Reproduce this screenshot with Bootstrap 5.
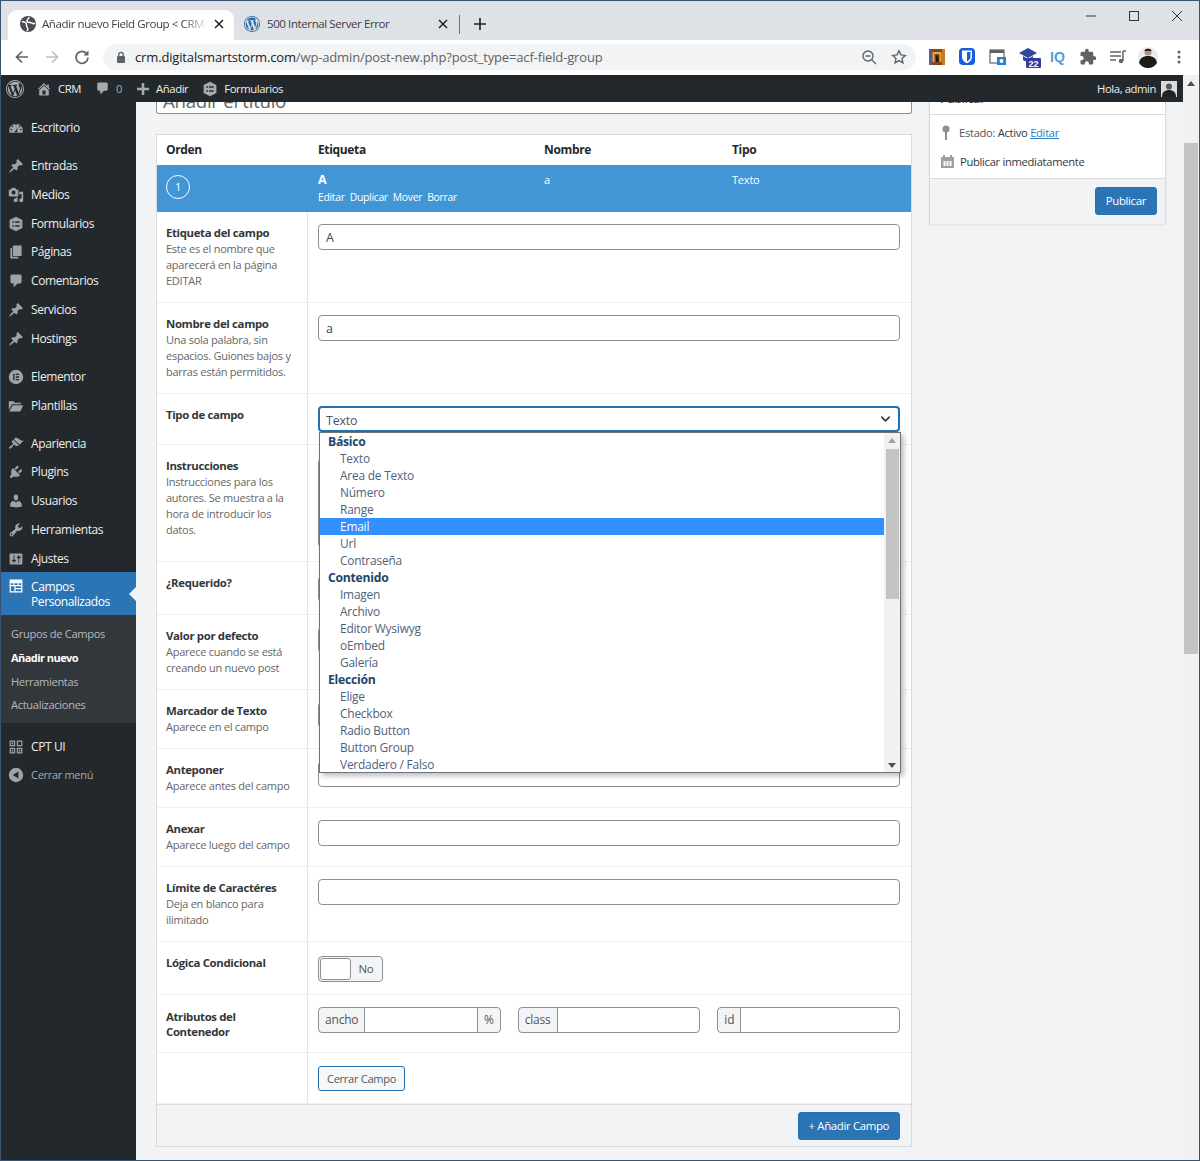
<!DOCTYPE html>
<html lang="es"><head><meta charset="utf-8"><title>Añadir nuevo Field Group</title>
<link href="https://cdn.jsdelivr.net/npm/bootstrap@5.3.0/dist/css/bootstrap.min.css" rel="stylesheet">
<style>
html,body{margin:0;height:1161px;overflow:hidden;background:#f2f3f5}
body{font-family:"Open Sans","Noto Sans",sans-serif;font-size:12px;letter-spacing:-.3px;color:#3c434a;line-height:16px}
.win{width:1200px;height:1161px;border:1px solid #3a5370;overflow:hidden;display:flex;flex-direction:column}
/* browser chrome */
.tabstrip{height:39px;flex:none;background:#dee1e6;position:relative;display:flex;align-items:flex-end;padding-left:7px}
.tabx{height:30px;display:flex;align-items:center;font-size:11.5px;letter-spacing:-.4px;color:#3c4043;white-space:nowrap;flex:none;padding-bottom:2px}
.tab-on{width:226px;background:#fff;border-radius:9px 9px 0 0;padding:0 10px 2px 12px;gap:6px}
.tab-off{width:225px;padding:0 11px 2px 10px;gap:7px}
.tab-title{flex:1;overflow:hidden}
.tab-on .tab-title{-webkit-mask-image:linear-gradient(90deg,#000 85%,transparent);mask-image:linear-gradient(90deg,#000 85%,transparent)}
.tabsep{width:1px;height:19px;background:#70757a;margin:0 0 6px 0;flex:none;align-self:flex-end}
.newtab{width:40px;text-align:center;flex:none}
.winbtns{margin-left:auto;display:flex;align-self:flex-start;padding-top:8px;gap:29px;padding-right:15px}
.toolbar{height:35px;flex:none;background:#fff;display:flex;align-items:center;padding-left:13px;border-bottom:1px solid #fff}
.navic{width:30px;flex:none;display:flex}
.omni{flex:none;width:813px;height:26px;background:#f1f3f4;border-radius:13px;margin-left:-1px;display:flex;align-items:center;padding:0 9px 0 12px;font-size:13px;letter-spacing:-.15px;color:#5f6368}
.omni b{font-weight:400;color:#202124}
.omni-end{margin-left:auto;display:flex;gap:14px;align-items:center}
.exts{display:flex;align-items:center;padding-left:13px;gap:14px}
.e-hat{margin-left:-3px}
.e-iq{margin-left:-6px;color:#4a9fe0;font-family:"Liberation Sans",sans-serif;font-size:14px;letter-spacing:0;font-weight:700}
.e-lst{margin-left:-2px}
.e-av{margin-left:-3px}
.e-dots{margin-left:5px}
.pageframe{flex:1;display:flex;min-height:0}
.pagecol{flex:1;min-width:0;display:flex;flex-direction:column}
.vscroll{width:16px;flex:none;background:#f1f1f1;display:flex;flex-direction:column;align-items:center}
.vscroll-thumb{width:14px;height:511px;background:#c4c4c4;margin-top:57px}
.vscroll-up{margin-top:6px;flex:none}
/* admin bar */
.abar{height:27px;flex:none;background:#23282d;color:#eee;display:flex;align-items:center;font-size:11.3px;letter-spacing:-.42px;padding-left:5px}
.abar svg{flex:none}
.abar .gy{color:#a7aaad}
.abar .me{margin-left:auto;display:flex;align-items:center;gap:5px;padding-right:6px}
.a-i{display:flex;align-items:center;gap:6px}
.a-g{margin-left:14px}
.adm{flex:1;display:flex;min-height:0}
/* sidebar */
.side{width:135px;flex:none;background:#23282d;color:#eef0f1;padding-top:11.6px}
.mi{height:28.8px;display:flex;align-items:center;gap:7px;padding-left:7px;font-size:12px;letter-spacing:-.4px;color:#eee}
.mi svg{fill:#9ea3a8;flex:none;width:16px;height:16px}
.msep{margin-top:9.2px}
.mi-on{height:43px;background:#2c75b5;color:#fff;position:relative;line-height:15px;margin-top:-.8px}
.mi-on svg{fill:#fff;align-self:flex-start;margin-top:6px}
.mi-on::after{content:"";position:absolute;right:0;top:15px;border:7px solid transparent;border-right-color:#f2f3f5;border-left-width:0}
.subm{background:#32373c;padding:7px 0 6px}
.si{height:23.7px;display:flex;align-items:center;padding-left:10px;color:#b4b9be;font-size:11.1px;letter-spacing:-.32px}
.si-on{color:#fff;font-weight:700;font-size:11px;letter-spacing:-.55px}
.mi-mute{color:#a7aaad;font-size:11px;letter-spacing:-.3px}
/* content */
.mainarea{flex:1;min-width:0;padding-left:20px;display:flex;gap:17px}
.col-fields{width:756px;flex:none}
.col-pub{width:237px;flex:none}
.title-cut{height:12px;background:#fff;border:1px solid #8c8f94;border-top:0;border-radius:0 0 3px 3px;overflow:hidden;font-size:18.7px;line-height:20px;color:#666;padding-left:6px;display:flex;align-items:flex-end}
.title-cut span{display:block;margin-bottom:2px}
.fbox{margin-top:20px;border:1px solid #d8dadd;background:#fff;height:1013px;position:relative}
.fhead{height:30px;display:flex;align-items:center;font-weight:700;font-size:12px;letter-spacing:-.35px;color:#23282d}
.c1{width:150px;padding-left:9px;flex:none}.c2{width:226px;padding-left:11px;flex:none}.c3{width:199px;padding-left:11px;flex:none}
.fblue{height:47px;background:#4396d6;color:#fff;display:flex;font-size:11px;letter-spacing:-.2px}
.fblue .c1{display:flex;align-items:center;padding-bottom:3px}
.numc{width:24px;height:24px;border:1px solid #fff;border-radius:50%;display:flex;align-items:center;justify-content:center;font-size:11px}
.fblue .c2,.fblue .c3,.fblue .c4{padding-top:7px}
.fblue strong{display:block;font-size:12.5px;line-height:16px}
.acts{display:flex;gap:5px;font-size:10.4px;letter-spacing:-.3px;line-height:16px;margin-top:1px}
.frow{display:flex;border-bottom:1px solid #f0f0f0}
.flab{width:151px;flex:none;padding:12px 11px 13px 9px;border-right:1px solid #e4e5e7}
.flab h6{margin:0;font-size:11.4px;line-height:17px;font-weight:700;color:#32373c;letter-spacing:-.35px}
.flab p{margin:0;font-size:11px;line-height:16px;color:#666;letter-spacing:-.25px}
.flab-two{padding-top:14px}
.flab-two h6{line-height:15px}
.fval{flex:1;min-width:0;padding:12px 11px 12px 10px}
.form-control.finp,.form-select.finp{height:26px;min-height:0;padding:1px 7px 0;font-size:12.5px;letter-spacing:-.2px;border:1px solid #8c8f94;border-radius:4px;color:#3c434a;box-shadow:none;line-height:24px}
.form-select.finp{border:2px solid #2271b1;padding-left:6px;background-position:right 6px center;background-size:13px 10px;color:#4b5563;background-image:url("data:image/svg+xml,%3csvg xmlns='http://www.w3.org/2000/svg' viewBox='0 0 16 16'%3e%3cpath fill='none' stroke='%23333' stroke-linecap='round' stroke-linejoin='round' stroke-width='2.4' d='m2 5 6 6 6-6'/%3e%3c/svg%3e")}
.form-control.tarea{height:92px;background:#fff;border-color:#8c8f94;display:block}
.tog{display:inline-flex;height:26px;margin-top:2px;width:65px;border:1px solid #8c8f94;border-radius:4px;background:#f3f4f6;align-items:center;padding:1px;font-size:11.5px;color:#555;vertical-align:top}
.tog i{display:block;width:31px;height:22px;background:#fff;border:1px solid #8c8f94;border-radius:3px;flex:none}
.tog span{flex:1;text-align:center}
.igroups{display:flex;gap:17px}
.igroups .input-group{flex:1;min-width:0;flex-wrap:nowrap}
.input-group-text.itxt{height:26px;padding:0 6px;background:#f3f4f6;border-color:#8c8f94;font-size:12px;color:#555;border-radius:4px;letter-spacing:-.2px}
.igroups .form-control{height:26px;border-color:#8c8f94;border-radius:4px;min-height:0;padding:0 6px;min-width:0}
.btn.bclose{height:25px;margin-top:1px;display:block;padding:0 8px;font-size:11px;letter-spacing:-.25px;color:#50575e;border:1px solid #2271b1;border-radius:3px;background:#f6f7f7;line-height:23px}
.ffoot{height:42px;background:#f2f3f5;display:flex;justify-content:flex-end;align-items:flex-start;padding:7px 11px 0 0;border-top:1px solid #dcdcde}
.btn.bwp{background:#2c75b5;border:1px solid #2271b1;color:#fff;font-size:11.4px;letter-spacing:-.35px;border-radius:3px;padding:0 10px;height:28px;line-height:26px}
/* select popup */
.sel-pop{position:absolute;left:162px;top:297px;width:582px;height:341px;background:#fff;border:1px solid #6f7378;box-shadow:3px 3px 5px rgba(0,0,0,.25);display:flex;font-size:11.9px;letter-spacing:-.2px;color:#50627a;overflow:hidden;z-index:5}
.sel-list{flex:1;min-width:0}
.ol,.og{height:17px;line-height:17px;white-space:nowrap}
.og{font-weight:700;color:#23456b;padding-left:8px;font-size:12.2px;letter-spacing:-.25px}
.ol{padding-left:20px}
.ol-on{background:#3390ff;color:#fff}
.sel-sb{width:16px;flex:none;background:#f1f1f1;display:flex;flex-direction:column;align-items:center}
.sel-thumb{width:13px;height:150px;background:#c4c4c4;margin-top:6px}
.sel-a{margin-top:5px;flex:none}
.sel-d{margin-top:auto;margin-bottom:4px;flex:none}
/* publish */
.pub{border:1px solid #d8dadd;border-top:0;height:122px;background:#fff;box-shadow:0 1px 2px rgba(0,0,0,.08)}
.pub-top{height:13px;border-bottom:1px solid #dcdcde;overflow:hidden;font-size:12px;line-height:16px;padding-left:10px;color:#444}
.pub-top span{display:block;margin-top:-11px;font-weight:600}
.pub-bd{height:63px;padding:3px 0 0 10px;background:#fff}
.pub-l{height:29px;display:flex;align-items:center;gap:5px;font-size:11.2px;color:#50575e;letter-spacing:-.3px}
.pub-l a{color:#2a7bc0}
.pub-l b{font-weight:400;color:#32373c}
.pub-ft{height:46px;border-top:1px solid #dcdcde;background:#f2f3f5;display:flex;justify-content:flex-end;padding:8px 8px 0 0}
</style></head><body>
<svg width="0" height="0" class="d-none position-absolute">
<symbol id="wp" viewBox="0 0 20 20"><path d="M20 10c0-5.52-4.48-10-10-10S0 4.48 0 10s4.48 10 10 10 10-4.48 10-10zM10 1.01c4.96 0 8.99 4.03 8.99 8.99s-4.03 8.99-8.99 8.99S1.01 14.96 1.01 10 5.04 1.01 10 1.01zM8.01 14.82L4.96 6.61c.49-.03 1.05-.08 1.05-.08.43-.05.38-1.01-.06-.99 0 0-1.29.1-2.13.1-.15 0-.33 0-.52-.01 1.44-2.17 3.9-3.6 6.7-3.6 2.09 0 3.99.79 5.41 2.09-.6-.08-1.45.35-1.45 1.42 0 .66.38 1.22.79 1.88.31.54.5 1.22.5 2.21 0 1.34-1.27 4.48-1.27 4.48l-2.71-7.5c.48-.03.75-.16.75-.16.43-.05.38-1.1-.05-1.08 0 0-1.3.11-2.14.11-.78 0-2.11-.11-2.11-.11-.43-.02-.48 1.06-.05 1.08l.84.08 1.12 3.04zm6.02 2.15L16.64 10s.67-1.69.39-3.81c.63 1.14.94 2.42.94 3.81 0 2.96-1.56 5.58-3.94 6.97zM2.68 6.77L6.5 17.25c-2.67-1.3-4.47-4.03-4.47-7.25 0-1.18.2-2.26.65-3.23zm7.45 4.53l2.29 6.25c-.75.27-1.57.42-2.42.42-.72 0-1.41-.11-2.06-.3z"/></symbol>
<symbol id="pin" viewBox="0 0 20 20"><path d="M10.44 3.02l1.82-1.82 6.36 6.35-1.83 1.82c-1.05-.68-2.48-.57-3.41.36l-.75.75c-.92.93-1.04 2.35-.35 3.41l-1.83 1.82-2.41-2.41-2.8 2.79c-.42.42-3.38 2.71-3.8 2.29s1.86-3.39 2.28-3.81l2.79-2.79L4.1 9.36l1.83-1.82c1.05.69 2.48.57 3.4-.36l.75-.75c.93-.92 1.05-2.35.36-3.41z"/></symbol>
<symbol id="comm" viewBox="0 0 20 20"><path d="M5 2h10c1.1 0 2 .9 2 2v7c0 1.1-.9 2-2 2h-3l-5 5v-5H5c-1.1 0-2-.9-2-2V4c0-1.1.9-2 2-2z"/></symbol>
<symbol id="forms" viewBox="0 0 20 20"><path fill-rule="evenodd" d="M10 .8 18 5v10l-8 4.2L2 15V5zM5.5 6.6v1.9h1.9V6.6zm3.4 0v1.9h5.6V6.6zm-3.4 4.9v1.9h1.9v-1.9zm3.4 0v1.9h5.6v-1.9z"/></symbol>
</svg>
<div class="win">
 <div class="tabstrip">
  <div class="tabx tab-on"><svg width="16" height="16" viewBox="0 0 16 16"><circle cx="8" cy="8" r="8" fill="#4a4d51"/><path d="M2 6c2-1 3 0 4 1s0 3 1 4 1 3 0 4M9 1c0 2-2 2-2 4s4 1 5 2 2 1 3 0" fill="none" stroke="#fff" stroke-width="1.5"/></svg><span class="tab-title">Añadir nuevo Field Group &lt; CRM — WordPress</span><svg width="10" height="10" viewBox="0 0 10 10"><path d="M1 1l8 8M9 1l-8 8" stroke="#202124" stroke-width="1.5"/></svg></div>
  <div class="tabx tab-off"><svg width="16" height="16" fill="#2e6ea6"><use href="#wp"/></svg><span class="tab-title">500 Internal Server Error</span><svg width="10" height="10" viewBox="0 0 10 10"><path d="M1 1l8 8M9 1l-8 8" stroke="#202124" stroke-width="1.5"/></svg></div>
  <div class="tabsep"></div>
  <div class="newtab tabx justify-content-center"><svg width="12" height="12" viewBox="0 0 12 12"><path d="M6 0v12M0 6h12" stroke="#202124" stroke-width="1.6"/></svg></div>
  <div class="winbtns">
   <svg width="14" height="14" viewBox="0 0 14 14"><path d="M2 7h10" stroke="#333" stroke-width="1"/></svg>
   <svg width="14" height="14" viewBox="0 0 14 14"><rect x="2.5" y="2.5" width="9" height="9" fill="none" stroke="#333"/></svg>
   <svg width="14" height="14" viewBox="0 0 14 14"><path d="M2 2l10 10M12 2 2 12" stroke="#333"/></svg>
  </div>
 </div>
 <div class="toolbar">
  <div class="navic"><svg width="16" height="16" viewBox="0 0 16 16"><path d="M14 8H2.5M8 2.5 2.5 8 8 13.5" fill="none" stroke="#5f6368" stroke-width="1.7"/></svg></div>
  <div class="navic"><svg width="16" height="16" viewBox="0 0 16 16"><path d="M2 8h11.5M8 2.5 13.5 8 8 13.5" fill="none" stroke="#bdc1c6" stroke-width="1.7"/></svg></div>
  <div class="navic"><svg width="16" height="16" viewBox="0 0 16 16"><path d="M13 5a6 6 0 1 0 1 3.5" fill="none" stroke="#5f6368" stroke-width="1.7"/><path d="M14.5 1.5v5h-5z" fill="#5f6368"/></svg></div>
  <div class="omni"><svg class="me-2" width="12" height="12" viewBox="0 0 12 12"><rect x="2" y="5" width="8" height="7" rx="1" fill="#5f6368"/><path d="M3.8 5V3.500a2.200 2.200 0 0 1 4.400 0V5" fill="none" stroke="#5f6368" stroke-width="1.300"/></svg><span><b>crm.digitalsmartstorm.com</b>/wp-admin/post-new.php?post_type=acf-field-group</span>
   <div class="omni-end">
    <svg width="16" height="16" viewBox="0 0 16 16"><circle cx="7" cy="7" r="5" fill="none" stroke="#5f6368" stroke-width="1.400"/><path d="M4.500 7h5M10.500 10.500 15 15" stroke="#5f6368" stroke-width="1.400"/></svg>
    <svg width="16" height="16" viewBox="0 0 16 16"><path d="M8 1.800l1.900 4.100 4.400.5-3.300 3 .9 4.400L8 11.600l-3.900 2.200.9-4.400-3.300-3 4.400-.5z" fill="none" stroke="#5f6368" stroke-width="1.400"/></svg>
   </div></div>
  <div class="exts">
   <svg width="16" height="16" viewBox="0 0 16 16"><rect width="16" height="16" rx="2" fill="#7b4a2a"/><rect x="0" width="3" height="16" fill="#4a5fa8"/><rect x="13" width="3" height="16" fill="#c97a24"/><path d="M4.500 13V4h7v9" fill="none" stroke="#f0a52a" stroke-width="2"/><path d="M7 13V6.500h2.500V13" fill="#1c1c1c"/></svg>
   <svg width="16" height="18" viewBox="0 0 16 18"><rect width="16" height="17" rx="4" fill="#175ddc"/><path d="M3 2.500h10v6.500c0 3-2.200 5-5 6.300C5.200 14 3 12 3 9z" fill="#fff"/><path d="M8 4h3.500v5c0 2-1.500 3.400-3.500 4.400z" fill="#175ddc"/></svg>
   <svg width="18" height="18" viewBox="0 0 18 18"><rect x="1" y="2" width="14" height="13" fill="#fff" stroke="#5f6368" stroke-width="1.200"/><rect x="1" y="2" width="14" height="3" fill="#5f6368"/><rect x="8" y="9" width="9" height="8" fill="#2a7fd0"/><circle cx="12.500" cy="13" r="2" fill="#fff"/></svg>
   <svg class="e-hat" width="24" height="24" viewBox="0 0 24 24"><path d="M1 8l9-5 9 5-9 5z" fill="#2b4a9b"/><path d="M5 11v4c2 2 8 2 10 0v-4l-5 3z" fill="#2b4a9b"/><rect x="8" y="13" width="15" height="10" rx="1" fill="#3a3a9a"/><text x="15.500" y="21.500" font-size="9" font-weight="700" text-anchor="middle" fill="#fff" font-family="Liberation Sans" letter-spacing="0">22</text></svg>
   <span class="e-iq">IQ</span>
   <svg width="18" height="18" viewBox="0 0 24 24" fill="#5f6368"><path d="M20.500 11H19V7c0-1.100-.9-2-2-2h-4V3.500a2.500 2.500 0 0 0-5 0V5H4c-1.100 0-2 .9-2 2v3.800h1.500c1.500 0 2.700 1.200 2.700 2.700S5 16.200 3.500 16.200H2V20c0 1.100.9 2 2 2h3.800v-1.500c0-1.500 1.200-2.700 2.700-2.700s2.700 1.200 2.700 2.700V22H17c1.100 0 2-.9 2-2v-4h1.500a2.500 2.500 0 0 0 0-5z"/></svg>
   <svg class="e-lst" width="18" height="16" viewBox="0 0 18 16"><path d="M1 3h11M1 7h11M1 11h6" stroke="#5f6368" stroke-width="1.500"/><path d="M14 2v10" stroke="#5f6368" stroke-width="1.500"/><circle cx="12" cy="12" r="2.200" fill="#5f6368"/><path d="M14 2h3" stroke="#5f6368" stroke-width="1.500"/></svg>
   <svg class="e-av" width="20" height="22" viewBox="0 0 20 22"><circle cx="10" cy="11" r="10" fill="#e8eaed"/><path d="M1 17c1-5 4-7 9-7s8 2 9 7c-2 3-5 5-9 5s-7-2-9-5z" fill="#1a1a1a"/><circle cx="10" cy="6" r="3.500" fill="#b8927a"/><path d="M6.500 5c0-3 7-3 7 0z" fill="#222"/></svg>
   <svg class="e-dots" width="4" height="14" viewBox="0 0 4 14"><circle cx="2" cy="2" r="1.500" fill="#5f6368"/><circle cx="2" cy="7" r="1.500" fill="#5f6368"/><circle cx="2" cy="12" r="1.500" fill="#5f6368"/></svg>
  </div>
 </div>
 <div class="pageframe">
  <div class="pagecol">
   <div class="abar">
    <svg width="18" height="18" fill="#a7aaad" class="me-2"><use href="#wp"/></svg>
    <div class="a-i ms-1"><svg width="16" height="16" viewBox="0 0 20 20" fill="#a7aaad"><path d="M16 8.500l1.530 1.530-1.060 1.060L10 4.620l-6.470 6.470-1.060-1.060L10 2.500l4 4v-2h2v4zm-6-2.460l6 5.990V18H4v-5.970zM12 17v-5H8v5h4z"/></svg><span>CRM</span></div>
    <div class="a-i a-g gy"><svg width="15" height="15" fill="#a7aaad"><use href="#comm"/></svg><span>0</span></div>
    <div class="a-i a-g"><svg width="14" height="14" viewBox="0 0 14 14"><path d="M7 1v12M1 7h12" stroke="#a7aaad" stroke-width="2.600"/></svg><span>Añadir</span></div>
    <div class="a-i a-g"><svg width="16" height="16" fill="#a7aaad"><use href="#forms"/></svg><span>Formularios</span></div>
    <div class="me"><span>Hola, admin</span><svg width="16" height="16" viewBox="0 0 16 16"><rect width="16" height="16" fill="#d9dbdd"/><path d="M1 16c0-5 3-7 7-7s7 2 7 7z" fill="#222"/><circle cx="8" cy="5.500" r="3" fill="#555"/></svg></div>
   </div>
   <div class="adm">
    <nav class="side">
     <div class="mi"><svg viewBox="0 0 20 20"><path fill-rule="evenodd" d="M2 16a8.500 8.500 0 1 1 16 0zM10 6.500a1 1 0 1 0 0-2 1 1 0 0 0 0 2zM5.500 9a1 1 0 1 0 0-2 1 1 0 0 0 0 2zm9 0a1 1 0 1 0 0-2 1 1 0 0 0 0 2zM4 13a1 1 0 1 0 0-2 1 1 0 0 0 0 2zm12 0a1 1 0 1 0 0-2 1 1 0 0 0 0 2zM8.500 14.500a1.600 1.600 0 0 0 3 0l.5-6-2 4.600a1.700 1.700 0 0 0-1.500 1.400z"/></svg><span>Escritorio</span></div>
     <div class="mi msep"><svg><use href="#pin"/></svg><span>Entradas</span></div>
     <div class="mi"><svg viewBox="0 0 20 20"><path d="M13 11V4c0-.55-.45-1-1-1h-1.670L9 1H5L3.670 3H2c-.55 0-1 .45-1 1v7c0 .55.45 1 1 1h10c.55 0 1-.45 1-1zM7 4.500c1.380 0 2.500 1.120 2.500 2.500S8.380 9.500 7 9.500 4.500 8.380 4.500 7 5.620 4.500 7 4.500zM14 6h5v10.500c0 1.380-1.120 2.500-2.500 2.500S14 17.880 14 16.500s1.120-2.500 2.500-2.500c.17 0 .34.02.5.05V9h-3V6zm-4 8.050V13h2v3.500c0 1.380-1.120 2.500-2.500 2.500S7 17.880 7 16.500 8.120 14 9.500 14c.17 0 .34.02.5.05z"/></svg><span>Medios</span></div>
     <div class="mi"><svg><use href="#forms"/></svg><span>Formularios</span></div>
     <div class="mi"><svg viewBox="0 0 20 20"><path d="M6 15V2h11v13H6zm-1 1h8v2H3V5h2v11z"/></svg><span>Páginas</span></div>
     <div class="mi"><svg><use href="#comm"/></svg><span>Comentarios</span></div>
     <div class="mi"><svg><use href="#pin"/></svg><span>Servicios</span></div>
     <div class="mi"><svg><use href="#pin"/></svg><span>Hostings</span></div>
     <div class="mi msep"><svg viewBox="0 0 20 20"><path fill-rule="evenodd" d="M10 1a9 9 0 1 1 0 18 9 9 0 0 1 0-18zM6.500 6v8h1.700V6zm3.300 0v1.600h4V6zm0 3.200v1.600h4V9.200zm0 3.200V14h4v-1.600z"/></svg><span>Elementor</span></div>
     <div class="mi"><svg viewBox="0 0 20 20"><path d="M1 4h6l1.500 2H16v1.800H5L1 15zM5.800 9H19l-3.500 8H1.500z"/></svg><span>Plantillas</span></div>
     <div class="mi msep"><svg viewBox="0 0 20 20"><path d="M14.480 11.060L7.410 3.990l1.500-1.500c.5-.56 2.300-.47 3.510.32 1.210.8 1.430 1.280 2.910 2.100 1.180.64 2.450 1.260 4.450.85zm-.71.710L6.700 4.700 4.930 6.470c-.39.39-.39 1.020 0 1.410l1.060 1.060c.39.39.39 1.030 0 1.420-.6.6-1.430 1.110-2.210 1.690-.35.26-.7.530-1.010.84C1.430 13.710.96 15.120 1.500 15.660c.54.54 1.950.07 3.180-1.150.31-.31.580-.66.840-1.010.58-.78 1.090-1.610 1.690-2.210.39-.39 1.020-.39 1.410 0l1.060 1.060c.39.39 1.020.39 1.410 0z"/></svg><span>Apariencia</span></div>
     <div class="mi"><svg viewBox="0 0 20 20"><path d="M13.110 4.360L9.870 7.600 8 5.730l3.240-3.240c.35-.34 1.050-.2 1.560.32.52.51.66 1.210.31 1.550zm-8 1.770l.91-1.120 9.010 9.010-1.190.84c-.71.71-2.630 1.160-3.820 1.160H6.140L4.900 17.260c-.59.59-1.540.59-2.120 0-.59-.58-.59-1.530 0-2.120l1.240-1.240v-3.880c0-1.130.4-3.190 1.090-3.890zm7.260 3.970l3.240-3.240c.34-.35 1.040-.21 1.550.31.52.51.66 1.210.31 1.550l-3.240 3.250z"/></svg><span>Plugins</span></div>
     <div class="mi"><svg viewBox="0 0 20 20"><path d="M10 9.250c-2.270 0-2.730-3.440-2.730-3.440C7 4.020 7.820 2 9.970 2c2.160 0 2.980 2.020 2.710 3.810 0 0-.41 3.440-2.680 3.440zm0 2.570L12.720 10c2.390 0 4.520 2.330 4.520 4.530v2.490s-3.650 1.130-7.240 1.130c-3.650 0-7.240-1.130-7.240-1.130v-2.490c0-2.250 1.940-4.480 4.470-4.480z"/></svg><span>Usuarios</span></div>
     <div class="mi"><svg viewBox="0 0 20 20"><path d="M16.680 9.770c-1.340 1.340-3.300 1.670-4.950.99l-5.410 6.520c-.99.99-2.590.99-3.580 0s-.99-2.59 0-3.570l6.520-5.420c-.68-1.650-.35-3.610.99-4.950 1.280-1.280 3.120-1.620 4.720-1.060l-2.890 2.890 2.820 2.820 2.860-2.870c.53 1.580.18 3.390-1.080 4.650zM3.810 16.210c.4.39 1.040.39 1.430 0 .4-.4.4-1.040 0-1.430-.39-.4-1.030-.4-1.430 0-.39.39-.39 1.030 0 1.430z"/></svg><span>Herramientas</span></div>
     <div class="mi"><svg viewBox="0 0 20 20"><path d="M18 16V4c0-.55-.45-1-1-1H3c-.55 0-1 .45-1 1v12c0 .55.45 1 1 1h14c.55 0 1-.45 1-1zM8 11h1c.55 0 1 .45 1 1s-.45 1-1 1H8v1.500c0 .28-.22.5-.5.5s-.5-.22-.5-.5V13H6c-.55 0-1-.45-1-1s.45-1 1-1h1V5.500c0-.28.22-.5.5-.5s.5.22.5.5V11zm5-2h-1c-.55 0-1-.45-1-1s.45-1 1-1h1V5.500c0-.28.22-.5.5-.5s.5.22.5.5V7h1c.55 0 1 .45 1 1s-.45 1-1 1h-1v5.500c0 .28-.22.5-.5.5s-.5-.22-.5-.5V9z"/></svg><span>Ajustes</span></div>
     <div class="mi mi-on"><svg viewBox="0 0 20 20"><path fill-rule="evenodd" d="M2 2h16v16H2zM3.500 6.500v2.300h3V6.500zm4.500 0v2.300h4V6.500zm5.500 0v2.300h3V6.500zM3.500 10.300v6.200h4.500v-6.200zm6 0v2.300h7v-2.300zm0 3.800v2.400h7v-2.400z"/></svg><span>Campos Personalizados</span></div>
     <div class="subm">
      <div class="si">Grupos de Campos</div>
      <div class="si si-on">Añadir nuevo</div>
      <div class="si">Herramientas</div>
      <div class="si">Actualizaciones</div>
     </div>
     <div class="mi msep"><svg viewBox="0 0 20 20"><path fill-rule="evenodd" d="M2 2h7v7H2zm1.500 1.500v4h4v-4zM11 2h7v7h-7zm1.500 1.500v4h4v-4zM2 11h7v7H2zm1.500 1.500v4h4v-4zM11 11h7v7h-7zm1.500 1.500v4h4v-4zM4.500 4.500h2v2h-2zM13.500 13.500h2v2h-2zM4.500 13.500h2v2h-2z"/></svg><span>CPT UI</span></div>
     <div class="mi mi-mute"><svg viewBox="0 0 20 20"><path fill-rule="evenodd" d="M10 1a9 9 0 1 1 0 18 9 9 0 0 1 0-18zm3 4.500L6 10l7 4.500z"/></svg><span>Cerrar menú</span></div>
    </nav>
    <main class="mainarea">
     <div class="col-fields">
      <div class="title-cut"><span>Añadir el título</span></div>
      <div class="fbox">
       <div class="fhead"><div class="c1">Orden</div><div class="c2">Etiqueta</div><div class="c3">Nombre</div><div class="c4">Tipo</div></div>
       <div class="fblue">
        <div class="c1"><div class="numc">1</div></div>
        <div class="c2"><strong>A</strong><div class="acts"><span>Editar</span><span>Duplicar</span><span>Mover</span><span>Borrar</span></div></div>
        <div class="c3">a</div><div class="c4">Texto</div>
       </div>
       <div class="frow"><div class="flab"><h6>Etiqueta del campo</h6><p>Este es el nombre que aparecerá en la página EDITAR</p></div><div class="fval"><input class="form-control finp" value="A"></div></div>
       <div class="frow"><div class="flab"><h6>Nombre del campo</h6><p>Una sola palabra, sin espacios. Guiones bajos y barras están permitidos.</p></div><div class="fval"><input class="form-control finp" value="a"></div></div>
       <div class="frow"><div class="flab"><h6>Tipo de campo</h6></div><div class="fval"><select class="form-select finp"><option>Texto</option></select></div></div>
       <div class="frow"><div class="flab"><h6>Instrucciones</h6><p>Instrucciones para los autores. Se muestra a la hora de introducir los datos.</p></div><div class="fval"><textarea class="form-control tarea"></textarea></div></div>
       <div class="frow"><div class="flab"><h6>¿Requerido?</h6></div><div class="fval"><div class="tog"><i></i><span>No</span></div></div></div>
       <div class="frow"><div class="flab"><h6>Valor por defecto</h6><p>Aparece cuando se está creando un nuevo post</p></div><div class="fval"><input class="form-control finp"></div></div>
       <div class="frow"><div class="flab"><h6>Marcador de Texto</h6><p>Aparece en el campo</p></div><div class="fval"><input class="form-control finp"></div></div>
       <div class="frow"><div class="flab"><h6>Anteponer</h6><p>Aparece antes del campo</p></div><div class="fval"><input class="form-control finp"></div></div>
       <div class="frow"><div class="flab"><h6>Anexar</h6><p>Aparece luego del campo</p></div><div class="fval"><input class="form-control finp"></div></div>
       <div class="frow"><div class="flab"><h6>Límite de Caractéres</h6><p>Deja en blanco para ilimitado</p></div><div class="fval"><input class="form-control finp"></div></div>
       <div class="frow"><div class="flab"><h6>Lógica Condicional</h6></div><div class="fval"><div class="tog"><i></i><span>No</span></div></div></div>
       <div class="frow"><div class="flab flab-two"><h6>Atributos del Contenedor</h6></div><div class="fval"><div class="igroups">
         <div class="input-group"><span class="input-group-text itxt">ancho</span><input class="form-control"><span class="input-group-text itxt">%</span></div>
         <div class="input-group"><span class="input-group-text itxt">class</span><input class="form-control"></div>
         <div class="input-group"><span class="input-group-text itxt">id</span><input class="form-control"></div>
       </div></div></div>
       <div class="frow"><div class="flab"></div><div class="fval"><button class="btn bclose" type="button">Cerrar Campo</button></div></div>
       <div class="ffoot"><button class="btn bwp" type="button">+ Añadir Campo</button></div>
       <div class="sel-pop">
        <div class="sel-list">
         <div class="og">Básico</div><div class="ol">Texto</div><div class="ol">Area de Texto</div><div class="ol">Número</div><div class="ol">Range</div><div class="ol ol-on">Email</div><div class="ol">Url</div><div class="ol">Contraseña</div>
         <div class="og">Contenido</div><div class="ol">Imagen</div><div class="ol">Archivo</div><div class="ol">Editor Wysiwyg</div><div class="ol">oEmbed</div><div class="ol">Galería</div>
         <div class="og">Elección</div><div class="ol">Elige</div><div class="ol">Checkbox</div><div class="ol">Radio Button</div><div class="ol">Button Group</div><div class="ol">Verdadero / Falso</div>
        </div>
        <div class="sel-sb"><svg class="sel-a" width="8" height="5" viewBox="0 0 8 5"><path d="M4 0l4 5H0z" fill="#a0a0a0"/></svg><div class="sel-thumb"></div><svg class="sel-d" width="8" height="5" viewBox="0 0 8 5"><path d="M4 5 0 0h8z" fill="#505050"/></svg></div>
       </div>
      </div>
     </div>
     <aside class="col-pub">
      <div class="pub">
       <div class="pub-top"><span>Publicar</span></div>
       <div class="pub-bd">
        <div class="pub-l"><svg width="14" height="16" viewBox="0 0 14 16"><circle cx="6" cy="4" r="3.500" fill="#8c8f94"/><path d="M6 6v9" stroke="#8c8f94" stroke-width="2"/></svg><span>Estado: <b>Activo</b> <a href="#">Editar</a></span></div>
        <div class="pub-l"><svg width="15" height="15" viewBox="0 0 15 15"><rect x="1" y="3" width="13" height="11" fill="#9ca0a5"/><rect x="3" y="1" width="2" height="3" fill="#9ca0a5"/><rect x="10" y="1" width="2" height="3" fill="#9ca0a5"/><path d="M3.500 7h2v5h-2zM6.500 7h2v5h-2zM9.500 7h2v5h-2z" fill="#fff"/></svg><span><b>Publicar inmediatamente</b></span></div>
       </div>
       <div class="pub-ft"><button class="btn bwp" type="button">Publicar</button></div>
      </div>
     </aside>
    </main>
   </div>
  </div>
  <div class="vscroll"><svg class="vscroll-up" width="8" height="5" viewBox="0 0 8 5"><path d="M4 0l4 5H0z" fill="#505050"/></svg><div class="vscroll-thumb"></div></div>
 </div>
</div>
</body></html>
